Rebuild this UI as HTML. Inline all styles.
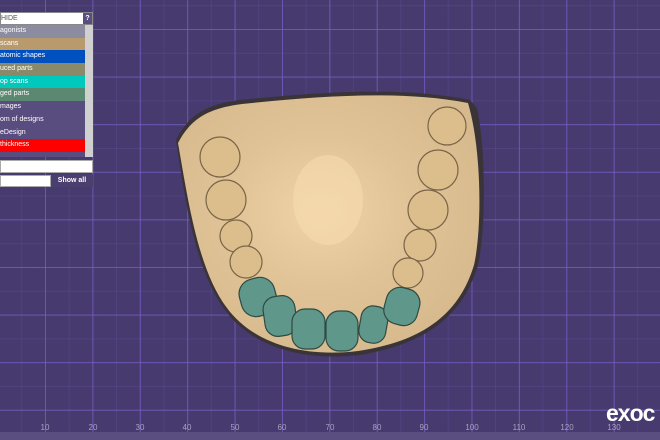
<!DOCTYPE html>
<html><head><style>
body{margin:0;width:660px;height:440px;overflow:hidden;background:#463a6e;font-family:"Liberation Sans",sans-serif;position:relative}
.grid{position:absolute;left:0;top:0;width:660px;height:432px;
background-image:
linear-gradient(to right, rgba(120,95,200,.7) 1px, transparent 1px),
linear-gradient(to bottom, rgba(120,95,200,.7) 1px, transparent 1px),
linear-gradient(to right, rgba(100,80,160,.35) 1px, transparent 1px),
linear-gradient(to bottom, rgba(100,80,160,.35) 1px, transparent 1px);
background-size:47.4px 47.6px,47.4px 47.6px,23.7px 23.8px,23.7px 23.8px;
background-position:45px 29px,45px 29px,21.3px 5.2px,21.3px 5.2px}
.bar{position:absolute;left:0;top:432px;width:660px;height:8px;background:#5a4e80}
.lbl{position:absolute;top:423px;font-size:8px;color:#a8a0c0;transform:translateX(-50%)}
.panel{position:absolute;left:0;top:12px;width:93px}
.row{height:12.7px;font-size:7px;color:#fff;line-height:12.7px;width:85px;white-space:nowrap;overflow:hidden}
.logo{position:absolute;left:606px;top:400px;font-size:23px;font-weight:bold;color:#fff;letter-spacing:-1px}
</style></head><body>
<div class="grid"></div>
<div class="bar"></div>
<div class="lbl" style="left:45px">10</div><div class="lbl" style="left:93px">20</div><div class="lbl" style="left:140px">30</div><div class="lbl" style="left:187px">40</div><div class="lbl" style="left:235px">50</div><div class="lbl" style="left:282px">60</div><div class="lbl" style="left:330px">70</div><div class="lbl" style="left:377px">80</div><div class="lbl" style="left:424px">90</div><div class="lbl" style="left:472px">100</div><div class="lbl" style="left:519px">110</div><div class="lbl" style="left:567px">120</div><div class="lbl" style="left:614px">130</div>
<div class="logo">exoc</div>

<svg width="660" height="440" style="position:absolute;left:0;top:0">
<defs>
<radialGradient id="pal" cx="0.47" cy="0.45" r="0.6"><stop offset="0" stop-color="#f0d4a6"/><stop offset="0.5" stop-color="#e0c396"/><stop offset="1" stop-color="#d6b98c"/></radialGradient>
</defs>
<path d="M176,140 C190,112 210,104 240,100 C320,92 400,86 470,100 L477,108 C486,150 486,230 478,265 C462,320 420,345 360,355 C300,362 250,345 225,310 C195,270 185,200 176,140 Z" fill="#3a3438"/>
<path d="M178,143 C192,116 212,108 242,104 C320,96 400,90 468,103 C482,150 482,230 474,265 C458,318 418,342 358,351 C300,358 252,342 227,308 C198,270 188,200 178,143 Z" fill="url(#pal)"/>
<ellipse cx="328" cy="200" rx="35" ry="45" fill="#f6dcb0" opacity=".6"/>
<g fill="#dcbd8c" stroke="#7a6448" stroke-width="1.2">
<circle cx="220" cy="157" r="20"/><circle cx="226" cy="200" r="20"/><circle cx="236" cy="236" r="16"/><circle cx="246" cy="262" r="16"/>
<circle cx="447" cy="126" r="19"/><circle cx="438" cy="170" r="20"/><circle cx="428" cy="210" r="20"/><circle cx="420" cy="245" r="16"/><circle cx="408" cy="273" r="15"/>
</g>
<g fill="#5f978a" stroke="#2e4a44" stroke-width="1.2">
<rect x="240" y="278" width="36" height="38" rx="15" transform="rotate(-15 258 297)"/>
<rect x="264" y="296" width="32" height="40" rx="13" transform="rotate(-8 280 316)"/>
<rect x="292" y="309" width="33" height="40" rx="13"/>
<rect x="326" y="311" width="32" height="40" rx="13"/>
<rect x="360" y="306" width="27" height="37" rx="12" transform="rotate(10 373 324)"/>
<rect x="385" y="288" width="34" height="37" rx="14" transform="rotate(15 402 306)"/>
</g>
</svg>

<div class="panel">
<div style="height:11px;background:#fff;border:1px solid #888;font-size:7px;color:#555;line-height:11px;position:relative">HIDE<span style="position:absolute;right:0;top:0;width:9px;height:11px;background:#5a4e80;color:#fff;text-align:center;font-weight:bold">?</span></div>
<div style="position:relative">
<div class="row" style="background:#8c8ca0">agonists</div>
<div class="row" style="background:#b89a6c">scans</div>
<div class="row" style="background:#0050c0">atomic shapes</div>
<div class="row" style="background:#8a8a6a">uced parts</div>
<div class="row" style="background:#00c8bc">op scans</div>
<div class="row" style="background:#5a8870">ged parts</div>
<div class="row" style="background:#594d80">mages</div>
<div class="row" style="background:#594d80">om of designs</div>
<div class="row" style="background:#594d80">eDesign</div>
<div class="row" style="background:#ff0000">thickness</div>
<div class="row" style="background:#594d80;height:5px"></div>
<div style="position:absolute;left:85px;top:0;width:8px;height:132px;background:#d0d0d0"></div>
</div>
<div style="height:11px;background:#fff;border:1px solid #aaa;margin-top:3px"></div>
<div style="margin-top:2px;height:11px;position:relative">
<div style="position:absolute;left:0;width:49px;height:10px;background:#fff;border:1px solid #aaa"></div>
<div style="position:absolute;left:51px;width:42px;height:12px;background:#4a3f6e;color:#fff;font-size:7px;font-weight:bold;text-align:center;line-height:12px">Show all</div>
</div>
</div>
</body></html>
